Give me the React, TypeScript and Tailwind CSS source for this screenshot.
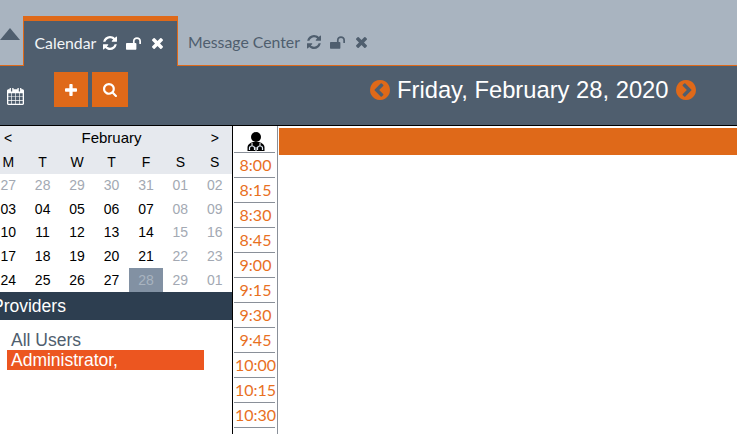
const weeks = [
  ["27", "28", "29", "30", "31", "01", "02"],
  ["03", "04", "05", "06", "07", "08", "09"],
  ["10", "11", "12", "13", "14", "15", "16"],
  ["17", "18", "19", "20", "21", "22", "23"],
  ["24", "25", "26", "27", "28", "29", "01"],
];
const days = ["M", "T", "W", "T", "F", "S", "S"];
const times = ["8:00", "8:15", "8:30", "8:45", "9:00", "9:15", "9:30", "9:45", "10:00", "10:15", "10:30"];

// weekends and days outside February are greyed out
function isMuted(week: number, col: number) {
  return week === 0 || col > 4;
}

// Font Awesome 4 glyphs, the set the screen was built with
const glyphs = {
  refresh: { box: "128 128 1536 1536", d: "M1639 1056q0 5-1 7-64 268-268 434.5t-478 166.5q-146 0-282.5-55t-243.5-157l-129 129q-19 19-45 19t-45-19-19-45v-448q0-26 19-45t45-19h448q26 0 45 19t19 45-19 45l-137 137q71 66 161 102t187 36q134 0 250-65t186-179q11-17 53-117 8-23 30-23h192q13 0 22.5 9.5t9.5 22.5zm25-800v448q0 26-19 45t-45 19h-448q-26 0-45-19t-19-45 19-45l138-138q-148-137-349-137-134 0-250 65t-186 179q-11 17-53 117-8 23-30 23h-199q-13 0-22.5-9.5t-9.5-22.5v-7q65-268 270-434.5t480-166.5q146 0 284 55.5t245 156.5l130-129q19-19 45-19t45 19 19 45z" },
  unlock: { box: "0 128 1664 1408", d: "M1664 576v256q0 26-19 45t-45 19h-64q-26 0-45-19t-19-45v-256q0-106-75-181t-181-75-181 75-75 181v192h96q40 0 68 28t28 68v576q0 40-28 68t-68 28h-960q-40 0-68-28t-28-68v-576q0-40 28-68t68-28h672v-192q0-185 131.5-316.5t316.5-131.5 316.5 131.5 131.5 316.5z" },
  times: { box: "110 366 1188 1188", d: "M1298 1322q0 40-28 68l-136 136q-28 28-68 28t-68-28l-294-294-294 294q-28 28-68 28t-68-28l-136-136q-28-28-28-68t28-68l294-294-294-294q-28-28-28-68t28-68l136-136q28-28 68-28t68 28l294 294 294-294q28-28 68-28t68 28l136 136q28 28 28 68t-28 68l-294 294 294 294q28 28 28 68z" },
  plus: { box: "-192 128 1408 1408", d: "M1216 736v192q0 40-28 68t-68 28h-416v416q0 40-28 68t-68 28h-192q-40 0-68-28t-28-68v-416h-416q-40 0-68-28t-28-68v-192q0-40 28-68t68-28h416v-416q0-40 28-68t68-28h192q40 0 68 28t28 68v416h416q40 0 68 28t28 68z" },
  search: { box: "64 128 1664 1664", d: "M1216 832q0-185-131.5-316.5t-316.5-131.5-316.5 131.5-131.5 316.5 131.5 316.5 316.5 131.5 316.5-131.5 131.5-316.5zm512 832q0 52-38 90t-90 38q-54 0-90-38l-343-342q-179 124-399 124-143 0-273.5-55.5t-225-150-150-225-55.5-273.5 55.5-273.5 150-225 225-150 273.5-55.5 273.5 55.5 225 150 150 225 55.5 273.5q0 220-124 399l343 343q37 37 37 90z" },
  calendar: { box: "64 128 1664 1664", d: "M192 1664h288v-288h-288v288zm352 0h320v-288h-320v288zm-352-352h288v-320h-288v320zm352 0h320v-320h-320v320zm-352-384h288v-288h-288v288zm736 736h320v-288h-320v288zm-384-736h320v-288h-320v288zm768 736h288v-288h-288v288zm-384-352h320v-320h-320v320zm-352-864v-288q0-13-9.5-22.5t-22.5-9.5h-64q-13 0-22.5 9.5t-9.5 22.5v288q0 13 9.5 22.5t22.5 9.5h64q13 0 22.5-9.5t9.5-22.5zm736 864h288v-320h-288v320zm-384-384h320v-288h-320v288zm384 0h288v-288h-288v288zm32-480v-288q0-13-9.5-22.5t-22.5-9.5h-64q-13 0-22.5 9.5t-9.5 22.5v288q0 13 9.5 22.5t22.5 9.5h64q13 0 22.5-9.5t9.5-22.5zm384-64v1280q0 52-38 90t-90 38h-1408q-52 0-90-38t-38-90v-1280q0-52 38-90t90-38h128v-96q0-66 47-113t113-47h64q66 0 113 47t47 113v96h384v-96q0-66 47-113t113-47h64q66 0 113 47t47 113v96h128q52 0 90 38t38 90z" },
  chevronLeft: { box: "128 128 1536 1536", d: "M1037 1395l102-102q19-19 19-45t-19-45l-307-307 307-307q19-19 19-45t-19-45l-102-102q-19-19-45-19t-45 19l-454 454q-19 19-19 45t19 45l454 454q19 19 45 19t45-19zm627-499q0 209-103 385.5t-279.5 279.5-385.5 103-385.5-103-279.5-279.5-103-385.5 103-385.5 279.5-279.5 385.5-103 385.5 103 279.5 279.5 103 385.5z" },
  chevronRight: { box: "128 128 1536 1536", d: "M845 1395l454-454q19-19 19-45t-19-45l-454-454q-19-19-45-19t-45 19l-102 102q-19 19-19 45t19 45l307 307-307 307q-19 19-19 45t19 45l102 102q19 19 45 19t45-19zm819-499q0 209-103 385.5t-279.5 279.5-385.5 103-385.5-103-279.5-279.5-103-385.5 103-385.5 279.5-279.5 385.5-103 385.5 103 279.5 279.5 103 385.5z" },
};

function Glyph({ name, className }: { name: keyof typeof glyphs; className: string }) {
  const g = glyphs[name];
  return (
    <svg viewBox={g.box} className={className} fill="currentColor" fillRule="evenodd">
      <path d={g.d} />
    </svg>
  );
}

function TabIcons({ color }: { color: string }) {
  return (
    <div className={`flex items-center ${color}`}>
      <Glyph name="refresh" className="w-[14px] h-[14px] ml-[7px]" />
      <Glyph name="unlock" className="w-[15px] h-[13px] ml-[9px]" />
      <Glyph name="times" className="w-[11px] h-[11px] ml-[11px]" />
    </div>
  );
}

// doctor with stethoscope, sits above the time column
function DoctorIcon() {
  return (
    <svg viewBox="0 0 18 19" className="w-[18px] h-[19px]">
      <circle cx="9" cy="5" r="5" fill="#000" />
      <path d="M0.500 19v-3.500C0.500 12.500 3 11 6 10h6c3 1 5.500 2.500 5.500 5.500V19z" fill="#000" />
      <path d="M5 11v3M13 11v3M9 15v4" stroke="#fff" strokeWidth="1" fill="none" />
      <path d="M2.500 18v-2C2.500 14.700 3.500 14 5 14s2.500.7 2.500 2v2" stroke="#e4eefa" strokeWidth="1.200" fill="none" />
      <path d="M10.500 18v-2c0-1.300 1-2 2.500-2s2.500.7 2.500 2v2" stroke="#e4eefa" strokeWidth="1.200" fill="none" />
    </svg>
  );
}

export default function App() {
  return (
    <div className="w-[737px] h-[434px] overflow-hidden bg-white flex flex-col font-['Liberation_Sans',sans-serif]">
      {/* Tab strip */}
      <div className="h-[66px] shrink-0 bg-[#a9b4c0] border-b border-[#df6919] flex items-end">
        <div className="w-[23px] h-[49px] shrink-0 relative">
          <div className="absolute left-0 top-[12px] w-0 h-0 border-l-[10px] border-r-[10px] border-b-[12px] border-l-transparent border-r-transparent border-b-[#4f5e6e]" />
        </div>
        <div className="w-[155px] h-[50px] -mb-px shrink-0 bg-[#4f5e6e] border-t-[5px] border-x border-[#df6919] border-b-0 flex items-center pl-[10.500px] pb-[1px] font-['Lato',sans-serif] text-[15.8px] text-[#f2f5f8]">
          <span>Calendar</span>
          <TabIcons color="text-white" />
        </div>
        <div className="h-[45px] flex items-center pl-[10px] pb-[1px] font-['Lato',sans-serif] text-[15.8px] text-[#4f5e6e]">
          <span>Message Center</span>
          <TabIcons color="text-[#4f5e6e]" />
        </div>
      </div>

      {/* Toolbar */}
      <div className="h-[60px] shrink-0 bg-[#4f5e6e] border-b border-black flex relative">
        <Glyph name="calendar" className="absolute left-[7px] top-[22px] w-[17px] h-[17px] text-white" />
        <div className="flex gap-[4px] ml-[54px] mt-[6px] h-[35px]">
          <div className="w-[34px] bg-[#df6919] flex items-center justify-center text-white">
            <Glyph name="plus" className="w-[12px] h-[12px]" />
          </div>
          <div className="w-[36px] bg-[#df6919] flex items-center justify-center text-white">
            <Glyph name="search" className="w-[14px] h-[14px]" />
          </div>
        </div>
        <div className="flex items-center ml-[242px] mt-[5px] h-[38px] text-[23.75px] text-white">
          <Glyph name="chevronLeft" className="w-[20px] h-[20px] text-[#df6919]" />
          <span className="ml-[7px]">Friday, February 28, 2020</span>
          <Glyph name="chevronRight" className="w-[20px] h-[20px] text-[#df6919] ml-[7px]" />
        </div>
      </div>

      <div className="flex flex-1 min-h-0">
        {/* Left panel */}
        <div className="w-[233px] shrink-0 border-r border-black overflow-hidden">
          <div className="w-[241px] -ml-[9px] text-[14px]">
            <div className="bg-[#e6e9ee] h-[48px] text-black">
              <div className="h-[24px] flex items-center text-[15px]">
                <div className="w-[34.4px] text-center text-[14px]">&lt;</div>
                <div className="flex-1 text-center">February</div>
                <div className="w-[34.4px] text-center text-[14px]">&gt;</div>
              </div>
              <div className="grid grid-cols-7 h-[24px] items-center text-center">
                {days.map((d, i) => (
                  <div key={i}>{d}</div>
                ))}
              </div>
            </div>
            {weeks.map((week, w) => (
              <div key={w} className="grid grid-cols-7 h-[23.6px] text-center">
                {week.map((d, c) => {
                  const selected = w === 4 && c === 4;
                  return (
                    <div
                      key={c}
                      className={`flex items-center justify-center ${selected ? "bg-[#8291a3] text-[#a9b4c0]" : isMuted(w, c) ? "text-[#a3a9b3]" : "text-black"}`}
                    >
                      {d}
                    </div>
                  );
                })}
              </div>
            ))}
            <div className="h-[28px] bg-[#2d3e50] text-white text-[17.5px] flex items-center pl-[1px]">Providers</div>
          </div>
          <div className="pl-[7px] pt-[10px] text-[17.5px] leading-[20px]">
            <div className="pl-[4px] text-[#4f5e6e]">All Users</div>
            <div className="w-[197px] pl-[4px] bg-[#ec5620] text-white">Administrator,</div>
          </div>
        </div>

        {/* Time column */}
        <div className="w-[45px] shrink-0 border-r border-[#8a9099] flex flex-col">
          <div className="h-[27px] ml-[1px] mr-[2px] border-b border-[#8a9099] flex items-center justify-center pl-[2px] pt-[5px]">
            <DoctorIcon />
          </div>
          {times.map((t) => (
            <div key={t} className="h-[25px] shrink-0 ml-[1px] mr-[2px] pl-[2px] border-b border-[#8a9099] flex items-center justify-center font-['Lato',sans-serif] text-[16px] text-[#e8701f]">
              {t}
            </div>
          ))}
        </div>

        {/* Schedule */}
        <div className="flex-1 pl-[1px] pt-[2px]">
          <div className="h-[27px] bg-[#df6919]" />
        </div>
      </div>
    </div>
  );
}
